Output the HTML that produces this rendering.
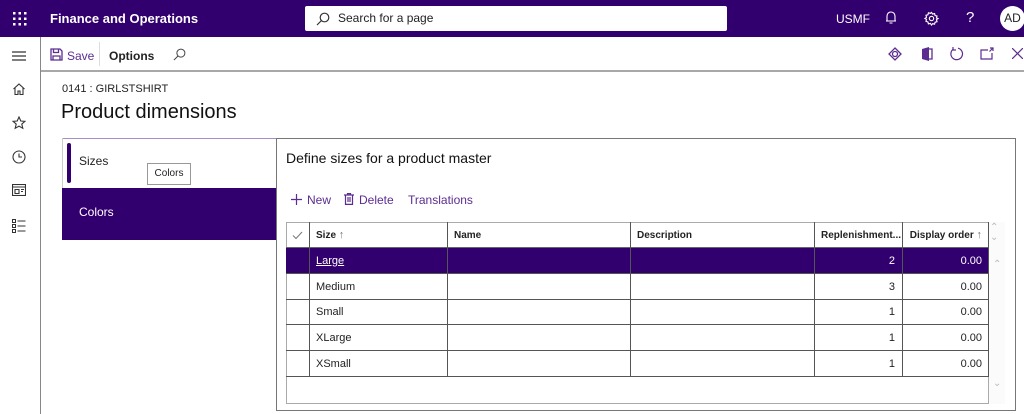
<!DOCTYPE html>
<html><head><meta charset="utf-8"><style>
*{box-sizing:border-box;margin:0;padding:0}
body{width:1024px;height:414px;overflow:hidden;background:#fff;font-family:"Liberation Sans",sans-serif;color:#222;position:relative}
.a{position:absolute}
.top{left:0;top:0;width:1024px;height:37px;background:#32006e;color:#fff}
svg{position:absolute}
.cell{position:absolute;font-size:11px;line-height:27px;padding:0 7px;white-space:nowrap}
</style></head><body>
<div class="a top">
 <svg style="left:13px;top:12px" width="14" height="14" viewBox="0 0 14 14" fill="#fff"><rect x="0" y="0" width="2.5" height="2.5"/><rect x="5.5" y="0" width="2.5" height="2.5"/><rect x="11" y="0" width="2.5" height="2.5"/><rect x="0" y="5.5" width="2.5" height="2.5"/><rect x="5.5" y="5.5" width="2.5" height="2.5"/><rect x="11" y="5.5" width="2.5" height="2.5"/><rect x="0" y="11" width="2.5" height="2.5"/><rect x="5.5" y="11" width="2.5" height="2.5"/><rect x="11" y="11" width="2.5" height="2.5"/></svg>
 <div class="a" style="left:50px;top:11px;font-size:13px;font-weight:bold">Finance and Operations</div>
 <div class="a" style="left:305px;top:6px;width:422px;height:25px;background:#fff;border-radius:2px;color:#222;font-size:12px;line-height:25px;padding-left:33px">Search for a page</div>
 <svg style="left:316px;top:12px" width="14" height="14" viewBox="0 0 14 14" fill="none" stroke="#333" stroke-width="1.2"><circle cx="8.5" cy="5.5" r="4.3"/><path d="M5.5 8.5L1 13"/></svg>
 <div class="a" style="left:836px;top:12px;font-size:12px">USMF</div>
 <svg style="left:885px;top:11px" width="12" height="14" viewBox="0 0 12 14" fill="none" stroke="#fff" stroke-width="1.1"><path d="M2 10V5a4 4 0 0 1 8 0v5zM1 10h10M4.5 12h3"/></svg>
 <svg style="left:924px;top:11px" width="15" height="15" viewBox="0 0 16 16" fill="none" stroke="#fff" stroke-width="1.2"><circle cx="8" cy="8" r="2.3"/><path d="M8 1.5l1.2 1.8 2.1-.6.5 2.1 2.1.6-.6 2.1L15 8l-1.7 1.3.6 2.1-2.1.6-.5 2.1-2.1-.6L8 15l-1.2-1.8-2.1.6-.5-2.1-2.1-.6.6-2.1L1 8l1.7-1.3-.6-2.1 2.1-.6.5-2.1 2.1.6z"/></svg>
 <div class="a" style="left:966px;top:9px;font-size:15px">?</div>
 <div class="a" style="left:1000px;top:6px;width:25px;height:25px;border-radius:50%;background:#fff;color:#222;font-size:12px;line-height:25px;text-align:center">AD</div>
</div>
<div class="a" style="left:40px;top:37px;width:1px;height:377px;background:#888"></div>
<svg style="left:12px;top:50px" width="14" height="12" viewBox="0 0 14 12" stroke="#333" stroke-width="1.2"><path d="M0 2h14M0 6h14M0 10h14"/></svg>
<svg style="left:12px;top:82px" width="14" height="14" viewBox="0 0 14 14" fill="none" stroke="#333" stroke-width="1.1"><path d="M1.5 7L7 2l5.5 5M3 6v6.5h3V9h2v3.5h3V6"/></svg>
<svg style="left:12px;top:116px" width="14" height="14" viewBox="0 0 14 14" fill="none" stroke="#333" stroke-width="1.1"><path d="M7 1l1.8 4 4.2.3-3.2 2.8 1 4.2L7 10.1 3.2 12.3l1-4.2L1 5.3l4.2-.3z"/></svg>
<svg style="left:12px;top:150px" width="14" height="14" viewBox="0 0 14 14" fill="none" stroke="#333" stroke-width="1.1"><circle cx="7" cy="7" r="6"/><path d="M7 3.5V7h3"/></svg>
<svg style="left:12px;top:184px" width="14" height="12" viewBox="0 0 14 12" fill="none" stroke="#333" stroke-width="1.1"><rect x=".5" y=".5" width="13" height="11"/><path d="M.5 3h13M3 5.5h4v4H3zM9 5.5h3M9 7.5h2"/></svg>
<svg style="left:12px;top:219px" width="14" height="14" viewBox="0 0 14 14" fill="none" stroke="#333" stroke-width="1"><rect x=".5" y=".5" width="3" height="3"/><rect x=".5" y="5.5" width="3" height="3"/><rect x=".5" y="10.5" width="3" height="3"/><path d="M5.5 2h8M5.5 7h8M5.5 12h8"/></svg>
<div class="a" style="left:41px;top:70px;width:983px;height:2px;background:#a8a8a8"></div>
<svg style="left:50px;top:48px" width="13" height="13" viewBox="0 0 13 13" fill="none" stroke="#5c2d91" stroke-width="1.3"><path d="M1 1h9l2 2v9H1z"/><path d="M3.5 1v3.5h5V1M3 12V8h7v4"/></svg>
<div class="a" style="left:67px;top:49px;font-size:12px;color:#5c2d91">Save</div>
<div class="a" style="left:99px;top:42px;width:1px;height:24px;background:#ddd"></div>
<div class="a" style="left:109px;top:49px;font-size:12px;font-weight:bold;color:#222">Options</div>
<svg style="left:173px;top:48px" width="13" height="13" viewBox="0 0 14 14" fill="none" stroke="#444" stroke-width="1.1"><circle cx="8.5" cy="5.5" r="4.3"/><path d="M5.5 8.5L1 13"/></svg>
<svg style="left:888px;top:47px" width="14" height="14" viewBox="0 0 14 14" fill="none" stroke="#5c2d91" stroke-width="1.3"><path d="M7 1l6 6-6 6-6-6z"/><circle cx="7" cy="7" r="2.5"/></svg>
<svg style="left:921px;top:47px" width="12" height="14" viewBox="0 0 12 14" fill="#5c2d91"><path d="M1 2l7-2v14l-7-2z"/><path d="M8 2h3v10H8" fill="none" stroke="#5c2d91" stroke-width="1.3"/></svg>
<svg style="left:949px;top:46px" width="15" height="15" viewBox="0 0 15 15" fill="none" stroke="#5c2d91" stroke-width="1.2"><path d="M9 2.2A5.8 5.8 0 1 1 4.5 3"/><path d="M4 1v3h3"/></svg>
<svg style="left:980px;top:47px" width="14" height="13" viewBox="0 0 14 13" fill="none" stroke="#5c2d91" stroke-width="1.2"><path d="M8 3H1v9h11V6M10 1h3v3M13 1l-3.5 3.5"/></svg>
<svg style="left:1012px;top:48px" width="11" height="11" viewBox="0 0 11 11" stroke="#5c2d91" stroke-width="1.2"><path d="M0 0l11 11M11 0L0 11"/></svg>
<div class="a" style="left:62px;top:83px;font-size:11px;color:#222">0141 : GIRLSTSHIRT</div>
<div class="a" style="left:61px;top:101px;font-size:20px;color:#111">Product dimensions</div>
<div class="a" style="left:62px;top:138px;width:214px;height:1px;background:#a88ec8"></div>
<div class="a" style="left:62px;top:138px;width:1px;height:50px;background:#ccc"></div>
<div class="a" style="left:67px;top:143px;width:4px;height:40px;background:#32006e;border-radius:2px"></div>
<div class="a" style="left:79px;top:154px;font-size:12px;color:#222">Sizes</div>
<div class="a" style="left:147px;top:163px;width:44px;height:22px;border:1px solid #999;background:#fff;font-size:10px;line-height:20px;text-align:center">Colors</div>
<div class="a" style="left:62px;top:188px;width:214px;height:52px;background:#32006e;color:#fff;font-size:12px;line-height:48px;padding-left:17px">Colors</div>
<div class="a" style="left:276px;top:138px;width:740px;height:273px;border:1px solid #777"></div>
<div class="a" style="left:286px;top:150px;font-size:14px;color:#111">Define sizes for a product master</div>
<svg style="left:291px;top:194px" width="11" height="11" viewBox="0 0 11 11" stroke="#5c2d91" stroke-width="1.2"><path d="M5.5 0v11M0 5.5h11"/></svg>
<div class="a" style="left:307px;top:193px;font-size:12px;color:#5c2d91">New</div>
<svg style="left:344px;top:193px" width="10" height="12" viewBox="0 0 10 12" fill="none" stroke="#5c2d91" stroke-width="1.2"><path d="M0 2h10M3.5 2V.6h3V2M1.5 2v9.4h7V2M4 4v5M6 4v5"/></svg>
<div class="a" style="left:359px;top:193px;font-size:12px;color:#5c2d91">Delete</div>
<div class="a" style="left:408px;top:193px;font-size:12px;color:#5c2d91">Translations</div>
<div class="a" style="left:286px;top:222px;width:703px;height:182px;border:1px solid #aaa"></div>
<div class="a" style="left:989px;top:222px;width:16px;height:182px;background:#fbfbfb"></div>
<div class="a" style="left:990px;top:223px;font-size:10px;color:#bbb;line-height:10px">&#8963;<br>&#8964;</div>
<div class="a" style="left:993px;top:259px;font-size:10px;color:#bbb">&#8963;</div>
<div class="a" style="left:993px;top:378px;font-size:10px;color:#bbb">&#8964;</div>
<div class="a" style="left:286px;top:248px;width:703px;height:26px;background:#32006e"></div>
<div class="a" style="left:286px;top:247px;width:703px;height:1px;background:#666"></div>
<div class="a" style="left:286px;top:299px;width:703px;height:1px;background:#555"></div>
<div class="a" style="left:286px;top:273px;width:703px;height:1px;background:#555"></div>
<div class="a" style="left:286px;top:324px;width:703px;height:1px;background:#555"></div>
<div class="a" style="left:286px;top:350px;width:703px;height:1px;background:#555"></div>
<div class="a" style="left:286px;top:376px;width:703px;height:1px;background:#555"></div>
<div class="a" style="left:309px;top:222px;width:1px;height:155px;background:#555"></div>
<div class="a" style="left:447px;top:222px;width:1px;height:155px;background:#555"></div>
<div class="a" style="left:630px;top:222px;width:1px;height:155px;background:#555"></div>
<div class="a" style="left:814px;top:222px;width:1px;height:155px;background:#555"></div>
<div class="a" style="left:902px;top:222px;width:1px;height:155px;background:#555"></div>
<div class="a" style="left:988px;top:222px;width:1px;height:155px;background:#555"></div>
<svg style="left:292px;top:231px" width="11" height="9" viewBox="0 0 11 9" fill="none" stroke="#777" stroke-width="1"><path d="M1 4.5l3 3L10 1"/></svg>
<div class="cell" style="left:309px;top:222px;font-size:10px;font-weight:bold">Size <span style="font-weight:normal;color:#777;font-size:11px">↑</span></div>
<div class="cell" style="left:447px;top:222px;font-size:10px;font-weight:bold">Name</div>
<div class="cell" style="left:630px;top:222px;font-size:10px;font-weight:bold">Description</div>
<div class="cell" style="left:814px;top:222px;font-size:10px;font-weight:bold">Replenishment...</div>
<div class="cell" style="left:902px;top:222px;width:87px;text-align:right;font-size:10px;font-weight:bold">Display order <span style="font-weight:normal;color:#777;font-size:11px">↑</span></div>
<div class="cell" style="left:309px;top:248px;color:#fff;text-decoration:underline">Large</div>
<div class="cell" style="left:814px;top:248px;width:88px;text-align:right;color:#fff">2</div>
<div class="cell" style="left:902px;top:248px;width:87px;text-align:right;color:#fff">0.00</div>
<div class="cell" style="left:309px;top:274px">Medium</div>
<div class="cell" style="left:814px;top:274px;width:88px;text-align:right">3</div>
<div class="cell" style="left:902px;top:274px;width:87px;text-align:right">0.00</div>
<div class="cell" style="left:309px;top:299px">Small</div>
<div class="cell" style="left:814px;top:299px;width:88px;text-align:right">1</div>
<div class="cell" style="left:902px;top:299px;width:87px;text-align:right">0.00</div>
<div class="cell" style="left:309px;top:325px">XLarge</div>
<div class="cell" style="left:814px;top:325px;width:88px;text-align:right">1</div>
<div class="cell" style="left:902px;top:325px;width:87px;text-align:right">0.00</div>
<div class="cell" style="left:309px;top:351px">XSmall</div>
<div class="cell" style="left:814px;top:351px;width:88px;text-align:right">1</div>
<div class="cell" style="left:902px;top:351px;width:87px;text-align:right">0.00</div>
</body></html>
